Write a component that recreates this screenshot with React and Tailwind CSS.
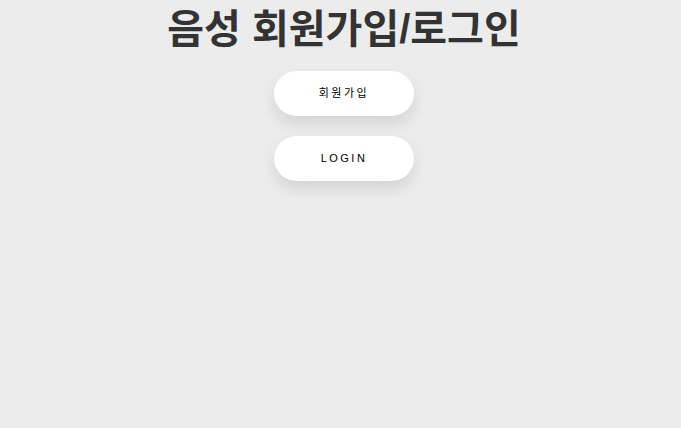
import React from "react";

const Button = ({ children }) => (
  <button className="w-[140px] h-[45px] rounded-full bg-white text-black text-[11px] font-normal uppercase tracking-[2.5px] shadow-[0_8px_15px_rgba(0,0,0,0.1)] border-none">
    {children}
  </button>
);

export default function App() {
  return (
    <div
      className="min-h-screen bg-[#ececec] flex flex-col items-center pl-[7px]"
      style={{ fontFamily: '"Liberation Sans", "Noto Sans CJK KR", sans-serif' }}
    >
      <h1 className="text-[40px] font-bold text-[#333] leading-[58px]">
        음성 회원가입/로그인
      </h1>
      <div className="flex flex-col gap-5 mt-[13px]">
        <Button>회원가입</Button>
        <Button>login</Button>
      </div>
    </div>
  );
}
